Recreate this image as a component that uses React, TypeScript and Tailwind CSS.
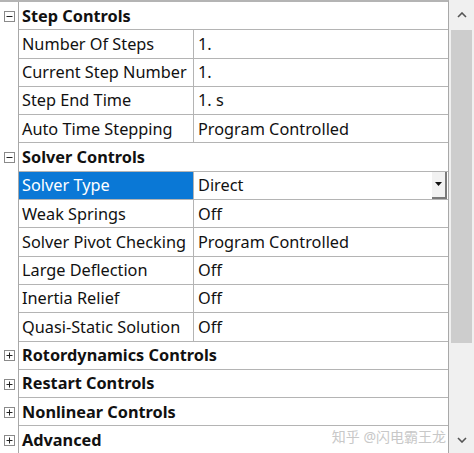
import React from "react";

type Row =
  | { kind: "group"; label: string; open: boolean }
  | { kind: "prop"; label: string; value: string; selected?: boolean; dropdown?: boolean };

const rows: Row[] = [
  { kind: "group", label: "Step Controls", open: true },
  { kind: "prop", label: "Number Of Steps", value: "1." },
  { kind: "prop", label: "Current Step Number", value: "1." },
  { kind: "prop", label: "Step End Time", value: "1. s" },
  { kind: "prop", label: "Auto Time Stepping", value: "Program Controlled" },
  { kind: "group", label: "Solver Controls", open: true },
  { kind: "prop", label: "Solver Type", value: "Direct", selected: true, dropdown: true },
  { kind: "prop", label: "Weak Springs", value: "Off" },
  { kind: "prop", label: "Solver Pivot Checking", value: "Program Controlled" },
  { kind: "prop", label: "Large Deflection", value: "Off" },
  { kind: "prop", label: "Inertia Relief", value: "Off" },
  { kind: "prop", label: "Quasi-Static Solution", value: "Off" },
  { kind: "group", label: "Rotordynamics Controls", open: false },
  { kind: "group", label: "Restart Controls", open: false },
  { kind: "group", label: "Nonlinear Controls", open: false },
  { kind: "group", label: "Advanced", open: false },
];

const Toggle = ({ open }: { open: boolean }) => (
  <svg width="11" height="11" viewBox="0 0 11 11" className="block">
    <rect x="0.5" y="0.5" width="10" height="10" fill="#fff" stroke="#8a8a8a" />
    <line x1="2.5" y1="5.5" x2="8.5" y2="5.5" stroke="#222" />
    {!open && <line x1="5.5" y1="2.5" x2="5.5" y2="8.5" stroke="#222" />}
  </svg>
);

export default function App() {
  return (
    <div
      className="flex w-[474px] h-[453px] overflow-hidden bg-white text-[16.3px] text-[#111]"
      style={{ fontFamily: '"Noto Sans", "Open Sans", "Noto Sans CJK SC", sans-serif' }}
    >
      <div className="relative flex-1 flex flex-col border-t-2 border-[#b4b4b4] border-r border-r-[#a8a8a8]">
        {rows.map((r, i) => (
          <div key={i} className="flex h-[28.3px] shrink-0">
            <div className="w-[19px] shrink-0 border-r border-[#a8a8a8] flex items-center justify-center pl-[1px]">
              {r.kind === "group" && <Toggle open={r.open} />}
            </div>
            {r.kind === "group" ? (
              <div className="flex-1 flex items-center pl-[3px] font-bold border-b border-[#b4b4b4] leading-none">
                {r.label}
              </div>
            ) : (
              <div className="flex-1 flex border-b border-[#b4b4b4]">
                <div
                  className={`w-[175px] shrink-0 flex items-center pl-[3px] border-r border-[#b4b4b4] leading-none whitespace-nowrap ${
                    r.selected ? "bg-[#0a78d6] text-white" : ""
                  }`}
                >
                  {r.label}
                </div>
                <div className="flex-1 flex items-center pl-[4px] leading-none whitespace-nowrap">
                  <span className="flex-1">{r.value}</span>
                  {r.dropdown && (
                    <div className="w-[15px] h-full flex items-center justify-center bg-[#f2f2f2] border-r-2 border-b-2 border-[#7a7a7a] mr-[1px]">
                      <svg width="7" height="4" viewBox="0 0 7 4">
                        <path d="M0 0 H7 L3.5 4 Z" fill="#111" />
                      </svg>
                    </div>
                  )}
                </div>
              </div>
            )}
          </div>
        ))}
        <div className="absolute right-[2px] bottom-[6px] text-[14px] text-[#c8c8c8] whitespace-nowrap">
          知乎 @闪电霸王龙
        </div>
      </div>
      <div className="w-[25px] shrink-0 flex flex-col bg-[#f0f0f0]">
        <div className="h-[30px] flex items-center justify-center">
          <svg width="10" height="6" viewBox="0 0 10 6">
            <path d="M1 5 L5 1 L9 5" fill="none" stroke="#555" strokeWidth="1.6" />
          </svg>
        </div>
        <div className="h-[313px] mx-[2px] bg-[#cdcdcd]" />
        <div className="flex-1" />
        <div className="h-[26px] flex items-center justify-center">
          <svg width="10" height="6" viewBox="0 0 10 6">
            <path d="M1 1 L5 5 L9 1" fill="none" stroke="#555" strokeWidth="1.6" />
          </svg>
        </div>
      </div>
    </div>
  );
}
